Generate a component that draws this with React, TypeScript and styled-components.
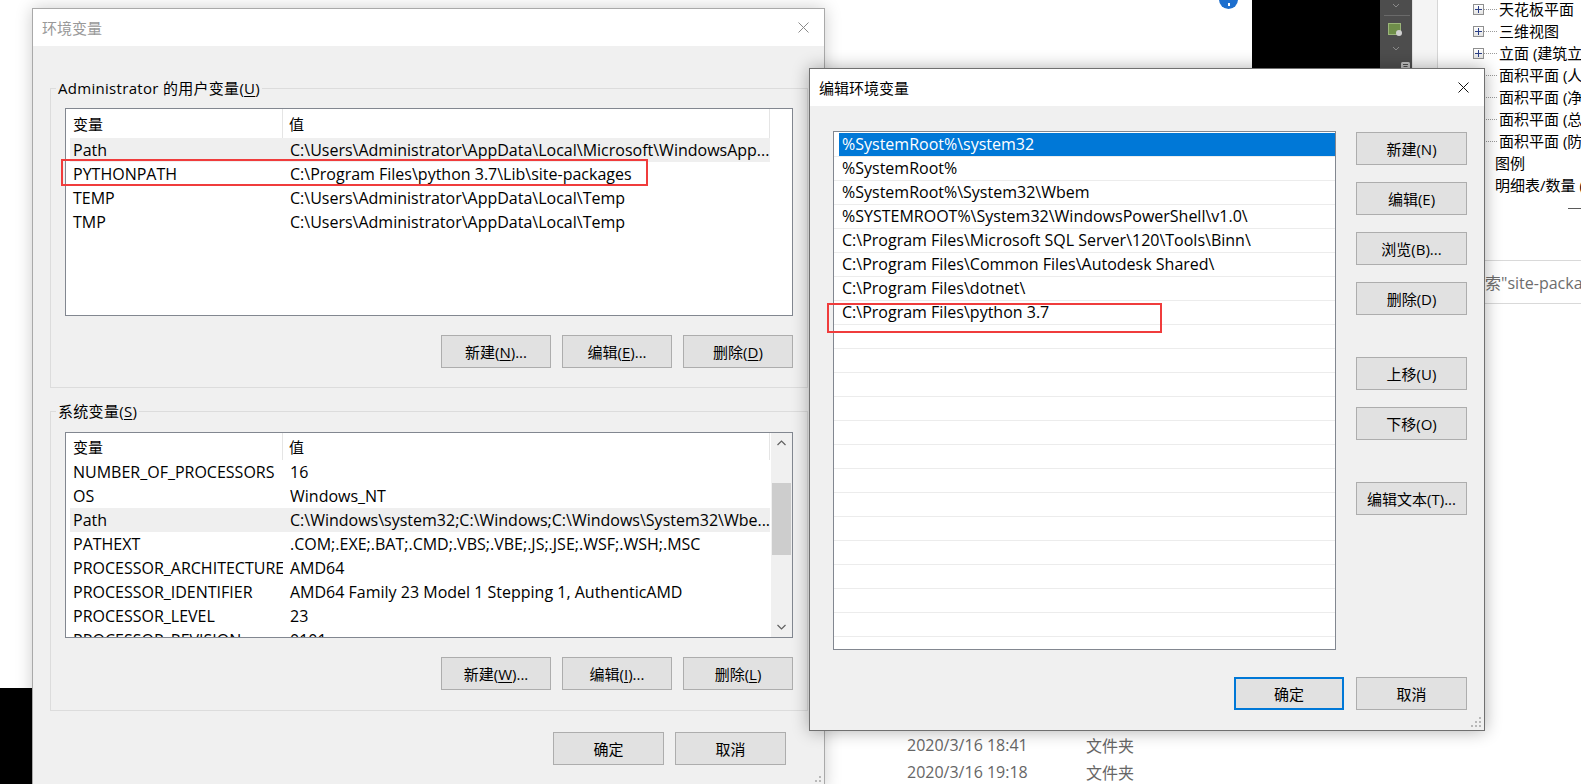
import React from 'react'
import styled, { createGlobalStyle, css } from 'styled-components'

const uiFont = `"Open Sans", "Noto Sans CJK SC", sans-serif`

const GlobalStyle = createGlobalStyle`
  html, body {
    margin: 0;
    padding: 0;
    background: #fff;
  }
  body {
    width: 1581px;
    height: 784px;
    overflow: hidden;
    font-family: ${uiFont};
    font-size: 15px;
    color: #000;
  }
  * {
    box-sizing: border-box;
  }
`

const userVars: [string, string][] = [
    ['Path', 'C:\\Users\\Administrator\\AppData\\Local\\Microsoft\\WindowsApp...'],
    ['PYTHONPATH', 'C:\\Program Files\\python 3.7\\Lib\\site-packages'],
    ['TEMP', 'C:\\Users\\Administrator\\AppData\\Local\\Temp'],
    ['TMP', 'C:\\Users\\Administrator\\AppData\\Local\\Temp'],
]

const systemVars: [string, string][] = [
    ['NUMBER_OF_PROCESSORS', '16'],
    ['OS', 'Windows_NT'],
    ['Path', 'C:\\Windows\\system32;C:\\Windows;C:\\Windows\\System32\\Wbe...'],
    ['PATHEXT', '.COM;.EXE;.BAT;.CMD;.VBS;.VBE;.JS;.JSE;.WSF;.WSH;.MSC'],
    ['PROCESSOR_ARCHITECTURE', 'AMD64'],
    ['PROCESSOR_IDENTIFIER', 'AMD64 Family 23 Model 1 Stepping 1, AuthenticAMD'],
    ['PROCESSOR_LEVEL', '23'],
    ['PROCESSOR_REVISION', '0101'],
]

const pathEntries = [
    '%SystemRoot%\\system32',
    '%SystemRoot%',
    '%SystemRoot%\\System32\\Wbem',
    '%SYSTEMROOT%\\System32\\WindowsPowerShell\\v1.0\\',
    'C:\\Program Files\\Microsoft SQL Server\\120\\Tools\\Binn\\',
    'C:\\Program Files\\Common Files\\Autodesk Shared\\',
    'C:\\Program Files\\dotnet\\',
    'C:\\Program Files\\python 3.7',
]

const treeItems: { label: string, kind: 'box' | 'leaf' | 'root' }[] = [
    { label: '天花板平面', kind: 'box' },
    { label: '三维视图', kind: 'box' },
    { label: '立面 (建筑立面)', kind: 'box' },
    { label: '面积平面 (人防分区面积)', kind: 'leaf' },
    { label: '面积平面 (净面积)', kind: 'leaf' },
    { label: '面积平面 (总建筑面积)', kind: 'leaf' },
    { label: '面积平面 (防火分区面积)', kind: 'leaf' },
    { label: '图例', kind: 'root' },
    { label: '明细表/数量 (全部)', kind: 'root' },
]

/* ---------- desktop background ---------- */

const Desktop = styled.div`
    position: relative;
    width: 1581px;
    height: 784px;
    overflow: hidden;
    background: #fff;
`

const BlackCorner = styled.div`
    position: absolute;
    left: 0;
    top: 688px;
    width: 40px;
    height: 96px;
    background: #000;
`

const InfoBadge = styled.div`
    position: absolute;
    left: 1219px;
    top: -10px;
    width: 19px;
    height: 19px;
    border-radius: 50%;
    background: #1d6fce;
    display: flex;
    justify-content: center;
    align-items: flex-end;
    padding-bottom: 3px;

    &::after {
        content: '';
        width: 2px;
        height: 3px;
        background: #fff;
    }
`

const Viewport = styled.div`
    position: absolute;
    left: 1252px;
    top: 0;
    width: 128px;
    height: 68px;
    background: #000;
`

const ToolStrip = styled.div`
    position: absolute;
    left: 1380px;
    top: 0;
    width: 32px;
    height: 68px;
    background: #4d4d4d;
`

const Splitter = styled.div`
    position: absolute;
    left: 1412px;
    top: 0;
    width: 26px;
    height: 68px;
    background: #f4f4f4;
    border-left: 1px solid #e2e2e2;
    border-right: 1px solid #d6d6d6;
`

const TreePanel = styled.div`
    position: absolute;
    left: 1438px;
    top: -2px;
    width: 143px;
    display: flex;
    flex-direction: column;
    background: #fff;
`

const TreeRow = styled.div<{ $indent: number }>`
    display: flex;
    align-items: center;
    height: 22px;
    padding-left: ${p => p.$indent}px;
    white-space: nowrap;
`

const Expander = styled.div`
    flex: none;
    width: 11px;
    height: 11px;
    border: 1px solid #8f8f8f;
    background: linear-gradient(#ffffff, #e4e4e4);
    display: flex;
    align-items: center;
    justify-content: center;
`

const Dots = styled.div<{ $w: number }>`
    flex: none;
    width: ${p => p.$w}px;
    border-top: 1px dotted #9a9a9a;
`

const TreeLabel = styled.span<{ $gap: number }>`
    margin-left: ${p => p.$gap}px;
    font-size: 15px;
    line-height: 22px;
    color: #000;
`

const PanelDash = styled.div`
    position: absolute;
    left: 1568px;
    top: 208px;
    width: 13px;
    border-top: 1px solid #5a5a5a;
`

const SearchBar = styled.div`
    position: absolute;
    left: 1469px;
    top: 260px;
    width: 112px;
    height: 44px;
    border-top: 1px solid #d9d9d9;
    border-bottom: 1px solid #d9d9d9;
    display: flex;
    align-items: center;
    color: #6d6d6d;
    font-size: 16px;
    white-space: nowrap;
    overflow: hidden;
`

const FileRows = styled.div`
    position: absolute;
    left: 907px;
    top: 731px;
    display: flex;
    flex-direction: column;
`

const FileRow = styled.div`
    display: flex;
    align-items: center;
    height: 27px;
    color: #666;
    font-size: 16px;
`

const FileDate = styled.span`
    width: 179px;
`

/* ---------- windows ---------- */

const Window = styled.div<{ $x: number, $y: number, $w: number, $h: number, $active?: boolean }>`
    position: absolute;
    left: ${p => p.$x}px;
    top: ${p => p.$y}px;
    width: ${p => p.$w}px;
    height: ${p => p.$h}px;
    display: flex;
    flex-direction: column;
    background: #f0f0f0;
    border: 1px solid ${p => p.$active ? '#707070' : '#a9a9a9'};
    box-shadow: 0 0 16px rgba(0, 0, 0, ${p => p.$active ? 0.32 : 0.2});
`

const TitleBar = styled.div<{ $active?: boolean }>`
    flex: none;
    height: 37px;
    background: #fff;
    display: flex;
    align-items: center;
    justify-content: space-between;
    padding: 0 15px 0 9px;
    font-size: 15px;
    color: ${p => p.$active ? '#000' : '#999'};
`

const Grip = styled.svg`
    position: absolute;
    right: 2px;
    bottom: 2px;
`

const Btn = styled.button<{ $w?: number, $primary?: boolean }>`
    flex: none;
    width: ${p => p.$w ?? 110}px;
    height: 33px;
    padding: 0;
    background: #e1e1e1;
    border: 1px solid #adadad;
    font-family: ${uiFont};
    font-size: 15px;
    color: #000;
    display: flex;
    align-items: center;
    justify-content: center;
    white-space: nowrap;

    ${p => p.$primary && css`
        border: 2px solid #0078d7;
    `}
`

const Key = styled.span`
    text-decoration: underline;
    text-underline-offset: 2px;
`

/* left dialog */

const EnvBody = styled.div`
    display: flex;
    flex-direction: column;
    padding: 0 16px 0 17px;
`

const Group = styled.fieldset<{ $mt: number, $pb: number }>`
    margin: ${p => p.$mt}px 0 0;
    padding: 0 14px ${p => p.$pb}px;
    border: 1px solid #dcdcdc;
    min-width: 0;
`

const GroupLegend = styled.legend`
    margin-left: -9px;
    padding: 0 2px;
    line-height: 20px;
    font-size: 15px;
    letter-spacing: 0.3px;
`

const ListFrame = styled.div<{ $h: number, $mt: number }>`
    margin-top: ${p => p.$mt}px;
    height: ${p => p.$h}px;
    border: 1px solid #828790;
    background: #fff;
    display: flex;
    overflow: hidden;
`

const ListContent = styled.div`
    flex: 1;
    min-width: 0;
    overflow: hidden;
`

const HeaderRow = styled.div<{ $h: number }>`
    display: flex;
    height: ${p => p.$h}px;
`

const HeaderCell = styled.div<{ $w: number, $pl: number }>`
    flex: none;
    width: ${p => p.$w}px;
    padding-left: ${p => p.$pl}px;
    display: flex;
    align-items: center;
    border-right: 1px solid #e5e5e5;
`

const ItemRow = styled.div<{ $selected?: boolean }>`
    display: flex;
    width: 700px;
    height: 24px;
    margin-left: 4px;
    background: ${p => p.$selected ? '#efefef' : 'transparent'};
`

const ItemCell = styled.div<{ $w: number, $pl: number }>`
    flex: none;
    width: ${p => p.$w}px;
    padding-left: ${p => p.$pl}px;
    font-size: 16px;
    line-height: 24px;
    white-space: nowrap;
    overflow: hidden;
`

const ButtonRow = styled.div<{ $mt: number, $pr?: number }>`
    display: flex;
    justify-content: flex-end;
    gap: 11px;
    margin-top: ${p => p.$mt}px;
    padding-right: ${p => p.$pr ?? 0}px;
`

const VScroll = styled.div`
    flex: none;
    width: 21px;
    display: flex;
    flex-direction: column;
    background: #f0f0f0;
`

const ScrollArrow = styled.div`
    height: 20px;
    display: flex;
    align-items: center;
    justify-content: center;
`

const ScrollTrack = styled.div`
    flex: 1;
    padding: 30px 1px 0;
`

const ScrollThumb = styled.div`
    height: 72px;
    background: #cdcdcd;
`

/* right dialog */

const EditBody = styled.div`
    display: grid;
    grid-template-columns: 503px 111px;
    column-gap: 20px;
    padding: 25px 0 0 23px;
`

const PathList = styled.div`
    height: 519px;
    border: 1px solid #828790;
    background: #fff;
    padding-top: 1px;
    overflow: hidden;
`

const PathRow = styled.div`
    height: 24px;
    padding-left: 5px;
    border-bottom: 1px solid #ececec;
    display: flex;
`

const PathCell = styled.div<{ $selected?: boolean }>`
    flex: 1;
    padding-left: 3px;
    font-size: 16px;
    line-height: 23px;
    white-space: nowrap;
    background: ${p => p.$selected ? '#0078d7' : 'transparent'};
    color: ${p => p.$selected ? '#fff' : '#000'};
`

const SideButtons = styled.div`
    display: flex;
    flex-direction: column;
    padding-top: 1px;
`

const SideBtn = styled(Btn)<{ $mt: number }>`
    width: 111px;
    margin-top: ${p => p.$mt}px;
`

const EditFooter = styled.div`
    grid-column: 1 / span 2;
    display: flex;
    justify-content: flex-end;
    gap: 12px;
    margin-top: 27px;
`

const Annotation = styled.div<{ $x: number, $y: number, $w: number, $h: number }>`
    position: absolute;
    left: ${p => p.$x}px;
    top: ${p => p.$y}px;
    width: ${p => p.$w}px;
    height: ${p => p.$h}px;
    border: 2px solid #f03c3c;
    pointer-events: none;
`

/* ---------- pieces ---------- */

const CloseIcon = ({ color }: { color: string }) => (
    <svg width="11" height="11" viewBox="0 0 11 11">
        <path d="M0.5 0.5 L10.5 10.5 M10.5 0.5 L0.5 10.5" stroke={color} strokeWidth="1" fill="none" />
    </svg>
)

const ResizeGrip = () => (
    <Grip width="12" height="12" viewBox="0 0 12 12">
        {[[9, 1], [9, 5], [5, 5], [9, 9], [5, 9], [1, 9]].map(([x, y], i) => (
            <rect key={i} x={x} y={y} width="2" height="2" fill="#b8b8b8" />
        ))}
    </Grip>
)

const Chevron = ({ up }: { up?: boolean }) => (
    <svg width="9" height="6" viewBox="0 0 9 6">
        <path d={up ? 'M0.5 5 L4.5 1 L8.5 5' : 'M0.5 1 L4.5 5 L8.5 1'} stroke="#606060" strokeWidth="1.2" fill="none" />
    </svg>
)

const PlusGlyph = () => (
    <svg width="7" height="7" viewBox="0 0 7 7">
        <path d="M0 3.5 H7 M3.5 0 V7" stroke="#2b3f86" strokeWidth="1" />
    </svg>
)

interface VarListProps {
    rows: [string, string][],
    selected: number,
    height: number,
    headerHeight: number,
    marginTop: number,
    scroll?: boolean,
}

const VarList = ({ rows, selected, height, headerHeight, marginTop, scroll }: VarListProps) => (
    <ListFrame $h={height} $mt={marginTop}>
        <ListContent>
            <HeaderRow $h={headerHeight}>
                <HeaderCell $w={217} $pl={7}>变量</HeaderCell>
                <HeaderCell $w={487} $pl={6}>值</HeaderCell>
            </HeaderRow>
            {rows.map(([name, value], i) => (
                <ItemRow key={name + i} $selected={i === selected}>
                    <ItemCell $w={213} $pl={3}>{name}</ItemCell>
                    <ItemCell $w={487} $pl={7}>{value}</ItemCell>
                </ItemRow>
            ))}
        </ListContent>
        {scroll && (
            <VScroll>
                <ScrollArrow><Chevron up /></ScrollArrow>
                <ScrollTrack><ScrollThumb /></ScrollTrack>
                <ScrollArrow><Chevron /></ScrollArrow>
            </VScroll>
        )}
    </ListFrame>
)

const EnvironmentDialog = () => (
    <Window $x={32} $y={8} $w={793} $h={782}>
        <TitleBar>
            <span>环境变量</span>
            <CloseIcon color="#8a8a8a" />
        </TitleBar>
        <EnvBody>
            <Group $mt={32} $pb={19}>
                <GroupLegend>Administrator 的用户变量(<Key>U</Key>)</GroupLegend>
                <VarList rows={userVars} selected={0} height={208} headerHeight={29} marginTop={10} />
                <ButtonRow $mt={19}>
                    <Btn>新建(<Key>N</Key>)...</Btn>
                    <Btn>编辑(<Key>E</Key>)...</Btn>
                    <Btn>删除(<Key>D</Key>)</Btn>
                </ButtonRow>
            </Group>
            <Group $mt={13} $pb={20}>
                <GroupLegend>系统变量(<Key>S</Key>)</GroupLegend>
                <VarList rows={systemVars} selected={2} height={206} headerHeight={27} marginTop={11} scroll />
                <ButtonRow $mt={19}>
                    <Btn>新建(<Key>W</Key>)...</Btn>
                    <Btn>编辑(<Key>I</Key>)...</Btn>
                    <Btn>删除(<Key>L</Key>)</Btn>
                </ButtonRow>
            </Group>
            <ButtonRow $mt={21} $pr={22}>
                <Btn $w={111}>确定</Btn>
                <Btn $w={111}>取消</Btn>
            </ButtonRow>
        </EnvBody>
        <ResizeGrip />
    </Window>
)

const EditDialog = () => {
    const rows = [...pathEntries, ...Array(14).fill('')]
    return (
        <Window $x={809} $y={68} $w={676} $h={663} $active>
            <TitleBar $active>
                <span>编辑环境变量</span>
                <CloseIcon color="#111" />
            </TitleBar>
            <EditBody>
                <PathList>
                    {rows.map((entry, i) => (
                        <PathRow key={i}>
                            <PathCell $selected={i === 0}>{entry}</PathCell>
                        </PathRow>
                    ))}
                </PathList>
                <SideButtons>
                    <SideBtn $mt={0}>新建(N)</SideBtn>
                    <SideBtn $mt={17}>编辑(E)</SideBtn>
                    <SideBtn $mt={17}>浏览(B)...</SideBtn>
                    <SideBtn $mt={17}>删除(D)</SideBtn>
                    <SideBtn $mt={42}>上移(U)</SideBtn>
                    <SideBtn $mt={17}>下移(O)</SideBtn>
                    <SideBtn $mt={42}>编辑文本(T)...</SideBtn>
                </SideButtons>
                <EditFooter>
                    <Btn $primary>确定</Btn>
                    <Btn $w={111}>取消</Btn>
                </EditFooter>
            </EditBody>
            <ResizeGrip />
        </Window>
    )
}

const ToolIcons = () => (
    <svg width="32" height="68" viewBox="0 0 32 68">
        <path d="M13 4 L16 7 L19 4" stroke="#8a8a8a" strokeWidth="1" fill="none" />
        <line x1="4" y1="15.5" x2="30" y2="15.5" stroke="#6a6a6a" />
        <rect x="8.5" y="23.5" width="12" height="11" fill="#6f8e4a" stroke="#9bb57a" />
        <circle cx="19" cy="33" r="3" fill="#d0d0d0" />
        <path d="M13 47 L16 50 L19 47" stroke="#8a8a8a" strokeWidth="1" fill="none" />
        <rect x="21" y="62" width="9" height="7" rx="1.5" fill="#bdbdbd" />
        <path d="M23 64.5 H28 M23.5 66.5 H27.5" stroke="#4d4d4d" strokeWidth="1" />
    </svg>
)

const Tree = () => (
    <TreePanel>
        {treeItems.map(item => (
            <TreeRow key={item.label} $indent={item.kind === 'root' ? 36 : item.kind === 'box' ? 35 : 41}>
                {item.kind !== 'leaf' && <Expander><PlusGlyph /></Expander>}
                {item.kind === 'box' && <Dots $w={13} />}
                {item.kind === 'leaf' && <Dots $w={18} />}
                <TreeLabel $gap={item.kind === 'root' ? 10 : 2}>{item.label}</TreeLabel>
            </TreeRow>
        ))}
    </TreePanel>
)

export default function App() {
    return (
        <>
            <GlobalStyle />
            <Desktop>
                <BlackCorner />
                <InfoBadge />
                <Viewport />
                <ToolStrip><ToolIcons /></ToolStrip>
                <Splitter />
                <Tree />
                <PanelDash />
                <SearchBar>搜索"site-packages"</SearchBar>
                <FileRows>
                    <FileRow><FileDate>2020/3/16 18:41</FileDate>文件夹</FileRow>
                    <FileRow><FileDate>2020/3/16 19:18</FileDate>文件夹</FileRow>
                </FileRows>
                <EnvironmentDialog />
                <EditDialog />
                <Annotation $x={61} $y={159} $w={587} $h={27} />
                <Annotation $x={827} $y={303} $w={335} $h={30} />
            </Desktop>
        </>
    )
}
